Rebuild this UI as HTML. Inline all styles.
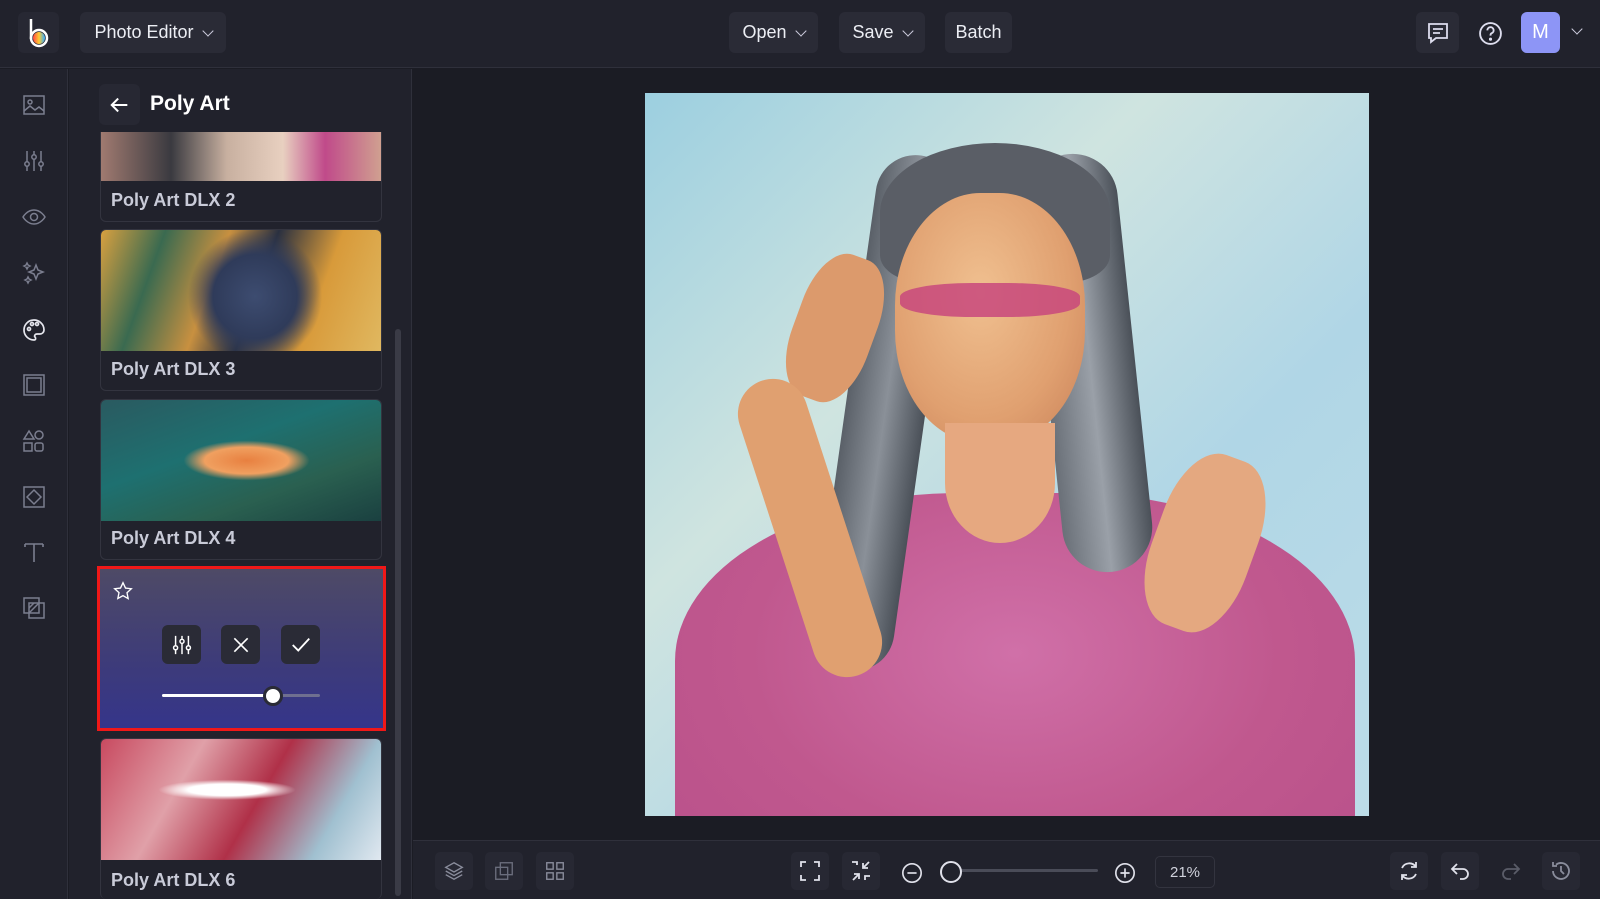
<!DOCTYPE html>
<html><head><meta charset="utf-8"><style>
*{box-sizing:border-box;margin:0;padding:0}
body{width:1600px;height:899px;overflow:hidden;background:#1b1c24;font-family:"Liberation Sans",sans-serif;color:#e6e7ee;position:relative}
.abs{position:absolute}
.top{left:0;top:0;width:1600px;height:68px;background:#21222c;border-bottom:1px solid #2f303b}
.btn{position:absolute;background:#2a2b36;border-radius:6px;color:#eceef4;font-size:18px;display:flex;align-items:center;justify-content:center;gap:10px}
.chev{width:8px;height:8px;border-right:1.6px solid #ccd;border-bottom:1.6px solid #ccd;transform:rotate(45deg);margin-top:-4px}
.side{left:0;top:69px;width:68px;height:830px;background:#21222c;border-right:1px solid #2f303b}
.panel{left:69px;top:69px;width:343px;height:830px;background:#21222c;border-right:1px solid #2f303b}
.card{position:absolute;left:100px;width:282px;border:1px solid #33343f;border-radius:6px;overflow:hidden;background:#21222c}
.card .lbl{position:absolute;left:10px;bottom:10px;font-size:18px;color:#c9cbd8;font-weight:bold}
.ic{position:absolute;left:22px;width:24px;height:24px}
.bot{left:413px;top:840px;width:1187px;height:59px;background:#21222c;border-top:1px solid #2f303b}
.bb{position:absolute;top:852px;width:38px;height:38px;background:#272833;border-radius:5px;display:flex;align-items:center;justify-content:center}
</style></head><body>
<div class="abs top"></div>
<div class="btn" style="left:18px;top:12px;width:41px;height:41px;background:#272833">
<svg width="28" height="32" viewBox="0 0 28 32"><path d="M6 2v20" stroke="#fff" stroke-width="2.5"/><circle cx="14" cy="21" r="8" fill="none" stroke="#fff" stroke-width="2.5"/><circle cx="14" cy="21" r="6" fill="url(#g)"/><defs><linearGradient id="g"><stop offset="0" stop-color="#f44"/><stop offset=".5" stop-color="#fc3"/><stop offset="1" stop-color="#3af"/></linearGradient></defs></svg></div>
<div class="btn" style="left:80px;top:12px;width:146px;height:41px">Photo Editor <span class="chev"></span></div>
<div class="btn" style="left:729px;top:12px;width:89px;height:41px">Open <span class="chev"></span></div>
<div class="btn" style="left:839px;top:12px;width:86px;height:41px">Save <span class="chev"></span></div>
<div class="btn" style="left:945px;top:12px;width:67px;height:41px">Batch</div>
<div class="btn" style="left:1416px;top:12px;width:43px;height:41px"><svg width="24" height="24" viewBox="0 0 24 24" fill="none" stroke="#dde" stroke-width="1.8"><path d="M3 3h18v14H10l-5 4v-4H3z"/><path d="M7 8h10M7 12h7"/></svg></div>
<div class="abs" style="left:1478px;top:21px"><svg width="25" height="25" viewBox="0 0 24 24" fill="none" stroke="#dde" stroke-width="1.8"><circle cx="12" cy="12" r="10"/><path d="M9 9a3 3 0 1 1 4 2.8c-1 .4-1 1.2-1 2.2"/><circle cx="12" cy="17.5" r=".6" fill="#dde"/></svg></div>
<div class="btn" style="left:1521px;top:12px;width:39px;height:41px;background:#8d95f6;font-size:20px;color:#fff">M</div>
<span class="chev abs" style="left:1573px;top:29px"></span>

<div class="abs side"></div>
<svg class="ic" style="top:93px" viewBox="0 0 24 24" fill="none" stroke="#7b7e8f" stroke-width="1.5"><rect x="2" y="3" width="20" height="18"/><circle cx="8" cy="9" r="2"/><path d="M2 18l6-5 5 4 4-3 5 4"/></svg>
<svg class="ic" style="top:149px" viewBox="0 0 24 24" fill="none" stroke="#7b7e8f" stroke-width="1.5"><path d="M5 2v20M12 2v20M19 2v20"/><circle cx="5" cy="15" r="2.2" fill="#21222c"/><circle cx="12" cy="8" r="2.2" fill="#21222c"/><circle cx="19" cy="15" r="2.2" fill="#21222c"/></svg>
<svg class="ic" style="top:205px" viewBox="0 0 24 24" fill="none" stroke="#7b7e8f" stroke-width="1.5"><path d="M1 12s4-7 11-7 11 7 11 7-4 7-11 7S1 12 1 12z"/><circle cx="12" cy="12" r="3.5"/></svg>
<svg class="ic" style="top:261px" viewBox="0 0 24 24" fill="none" stroke="#7b7e8f" stroke-width="1.5"><path d="M14 4l2 5 5 2-5 2-2 5-2-5-5-2 5-2zM5 2l1 2 2 1-2 1-1 2-1-2-2-1 2-1zM6 16l1 2 2 1-2 1-1 2-1-2-2-1 2-1z"/></svg>
<svg class="ic" style="top:318px" viewBox="0 0 24 24" fill="none" stroke="#e6e7ee" stroke-width="1.7"><path d="M12 2a10 10 0 1 0 0 20c2 0 2-2 1-3s0-3 2-3h3a4 4 0 0 0 4-4c0-6-5-10-10-10z"/><circle cx="7" cy="11" r="1.5"/><circle cx="10" cy="6" r="1.5"/><circle cx="15" cy="6" r="1.5"/></svg>
<svg class="ic" style="top:373px" viewBox="0 0 24 24" fill="none" stroke="#7b7e8f" stroke-width="1.5"><rect x="2" y="2" width="20" height="20"/><rect x="5" y="5" width="14" height="14"/></svg>
<svg class="ic" style="top:429px" viewBox="0 0 24 24" fill="none" stroke="#7b7e8f" stroke-width="1.5"><path d="M7 2l5 8H2z"/><circle cx="17" cy="6" r="4"/><rect x="2" y="14" width="8" height="8"/><rect x="13" y="14" width="8" height="8" rx="2"/></svg>
<svg class="ic" style="top:485px" viewBox="0 0 24 24" fill="none" stroke="#7b7e8f" stroke-width="1.5"><rect x="2" y="2" width="20" height="20"/><path d="M5 12l7-7 7 7-7 7z"/></svg>
<svg class="ic" style="top:540px" viewBox="0 0 24 24" fill="none" stroke="#7b7e8f" stroke-width="1.6"><path d="M3 4h18M12 4v18M3 4v3M21 4v3"/></svg>
<svg class="ic" style="top:596px" viewBox="0 0 24 24" fill="none" stroke="#7b7e8f" stroke-width="1.5"><rect x="2" y="2" width="15" height="15"/><rect x="7" y="7" width="15" height="15"/><path d="M7 12l5-5M7 17l10-10"/></svg>

<div class="abs panel"></div>
<div class="btn" style="left:99px;top:84px;width:41px;height:41px;background:#272833"><svg width="22" height="22" viewBox="0 0 24 24" fill="none" stroke="#fff" stroke-width="2.2"><path d="M20 12H4M10 5l-7 7 7 7"/></svg></div>
<div class="abs" style="left:150px;top:92px;font-size:21px;font-weight:bold;color:#fff">Poly Art</div>

<div class="card" style="top:132px;height:90px;border-top:none;border-radius:0 0 6px 6px"><div style="height:49px;background:linear-gradient(90deg,#a07a70,#3a3a40 25%,#c8b0a0 45%,#e8d0c0 65%,#c04a8a 80%,#d0a090)"></div><div class="lbl">Poly Art DLX 2</div></div>
<div class="card" style="top:229px;height:162px"><div style="height:121px;background:radial-gradient(circle at 55% 55%,#3d4c70 0,#2f3b5a 25%,transparent 40%),linear-gradient(110deg,#d8a040,#3a6a50 20%,#c89040 40%,#2a3040 55%,#d89a3a 75%,#e0b860)"></div><div class="lbl">Poly Art DLX 3</div></div>
<div class="card" style="top:399px;height:161px"><div style="height:121px;background:radial-gradient(ellipse 30% 22% at 52% 50%,#e88040 0,#f0a060 50%,transparent 75%),linear-gradient(160deg,#2a5a60,#1e7070 40%,#2a6050 70%,#1a4040)"></div><div class="lbl">Poly Art DLX 4</div></div>
<div class="abs" style="left:97px;top:566px;width:289px;height:165px;border:3px solid #f01818;background:linear-gradient(180deg,#4e4a66,#3d3b7a 60%,#35358a)"></div>
<svg class="abs" style="left:113px;top:581px" width="20" height="20" viewBox="0 0 24 24" fill="none" stroke="#fff" stroke-width="1.6"><path d="M12 2l3 6.5 7 .8-5.2 4.8 1.4 7L12 17.6 5.8 21l1.4-7L2 9.3l7-.8z"/></svg>
<div class="btn" style="left:162px;top:625px;width:39px;height:39px;background:#2a2b36"><svg width="22" height="22" viewBox="0 0 24 24" fill="none" stroke="#fff" stroke-width="1.6"><path d="M5 2v20M12 2v20M19 2v20"/><circle cx="5" cy="15" r="2.2" fill="#2a2b36"/><circle cx="12" cy="8" r="2.2" fill="#2a2b36"/><circle cx="19" cy="15" r="2.2" fill="#2a2b36"/></svg></div>
<div class="btn" style="left:221px;top:625px;width:39px;height:39px;background:#2a2b36"><svg width="20" height="20" viewBox="0 0 24 24" stroke="#fff" stroke-width="2"><path d="M4 4l16 16M20 4L4 20"/></svg></div>
<div class="btn" style="left:281px;top:625px;width:39px;height:39px;background:#2a2b36"><svg width="22" height="22" viewBox="0 0 24 24" fill="none" stroke="#fff" stroke-width="2"><path d="M3 12l6 6L21 5"/></svg></div>
<div class="abs" style="left:162px;top:694px;width:158px;height:3px;background:#6f6f90;border-radius:2px"></div>
<div class="abs" style="left:162px;top:694px;width:110px;height:3px;background:#fff;border-radius:2px"></div>
<div class="abs" style="left:263px;top:686px;width:20px;height:20px;border-radius:50%;background:#fff;border:3px solid #2a2b36"></div>
<div class="card" style="top:738px;height:161px;border-bottom:none"><div style="height:121px;background:radial-gradient(ellipse 35% 12% at 45% 42%,#fff 0,#fff 40%,transparent 70%),linear-gradient(120deg,#c84a60,#e0a0a8 30%,#b03048 55%,#a0c0d0 80%,#e0e8f0)"></div><div class="lbl" style="bottom:8px">Poly Art DLX 6</div></div>
<div class="abs" style="left:395px;top:329px;width:6px;height:567px;background:#3a3b46;border-radius:3px"></div>

<div class="abs" style="left:645px;top:93px;width:724px;height:723px;overflow:hidden;background:linear-gradient(135deg,#9ccfe0,#cfe4e0 35%,#b0d6e6 65%,#bcdce8)">
 <div class="abs" style="left:30px;top:400px;width:680px;height:400px;border-radius:42% 42% 0 0;background:radial-gradient(ellipse at 50% 40%,#d070a8,#c0588e 55%,#b8508a)"></div>
 <div class="abs" style="left:200px;top:60px;width:80px;height:520px;border-radius:40px;background:linear-gradient(90deg,#5a6068,#8a9098,#4a5058);transform:rotate(8deg)"></div>
 <div class="abs" style="left:400px;top:60px;width:90px;height:420px;border-radius:45px;background:linear-gradient(90deg,#6a7078,#9aa0a8,#4a5058);transform:rotate(-6deg)"></div>
 <div class="abs" style="left:235px;top:50px;width:230px;height:140px;border-radius:50% 50% 20% 20%;background:#5a5e66"></div>
 <div class="abs" style="left:250px;top:100px;width:190px;height:250px;border-radius:45%;background:radial-gradient(ellipse at 45% 40%,#f0c090,#e0a070 60%,#c88058)"></div>
 <div class="abs" style="left:255px;top:190px;width:180px;height:34px;border-radius:40%;background:#c8487c;opacity:.85"></div>
 <div class="abs" style="left:300px;top:330px;width:110px;height:120px;background:#e6a880;border-radius:0 0 50% 50%"></div>
 <div class="abs" style="left:150px;top:160px;width:80px;height:150px;border-radius:40%;background:#dc9a6c;transform:rotate(20deg)"></div>
 <div class="abs" style="left:130px;top:280px;width:70px;height:310px;border-radius:35px;background:#e0a070;transform:rotate(-18deg)"></div>
 <div class="abs" style="left:510px;top:360px;width:100px;height:180px;border-radius:40%;background:#e4a880;transform:rotate(20deg)"></div>
</div>

<div class="abs bot"></div>
<div class="bb" style="left:435px"><svg width="22" height="22" viewBox="0 0 24 24" fill="none" stroke="#8a8d9c" stroke-width="1.5"><path d="M12 3l9 5-9 5-9-5zM3 12l9 5 9-5M3 16l9 5 9-5"/></svg></div>
<div class="bb" style="left:485px"><svg width="22" height="22" viewBox="0 0 24 24" fill="none" stroke="#6a6d7c" stroke-width="1.5"><rect x="8" y="3" width="13" height="13"/><rect x="3" y="8" width="13" height="13"/></svg></div>
<div class="bb" style="left:536px"><svg width="22" height="22" viewBox="0 0 24 24" fill="none" stroke="#8a8d9c" stroke-width="1.5"><rect x="3" y="3" width="7" height="7"/><rect x="14" y="3" width="7" height="7"/><rect x="3" y="14" width="7" height="7"/><rect x="14" y="14" width="7" height="7"/></svg></div>
<div class="bb" style="left:791px"><svg width="24" height="24" viewBox="0 0 24 24" fill="none" stroke="#e0e1ea" stroke-width="1.8"><path d="M3 8V3h5M16 3h5v5M21 16v5h-5M8 21H3v-5"/></svg></div>
<div class="bb" style="left:842px"><svg width="24" height="24" viewBox="0 0 24 24" fill="none" stroke="#e0e1ea" stroke-width="1.8"><path d="M3 3h5v3M14 9l6-6M14 4v5h5M10 15l-6 6M5 15h5v5M16 21v-4h5"/></svg></div>
<svg class="abs" style="left:901px;top:862px" width="22" height="22" viewBox="0 0 24 24" fill="none" stroke="#e0e1ea" stroke-width="1.8"><circle cx="12" cy="12" r="10"/><path d="M7 12h10"/></svg>
<div class="abs" style="left:952px;top:869px;width:146px;height:3px;background:#4a4c58;border-radius:2px"></div>
<div class="abs" style="left:940px;top:861px;width:22px;height:22px;border-radius:50%;border:2px solid #e0e1ea;background:#21222c"></div>
<svg class="abs" style="left:1114px;top:862px" width="22" height="22" viewBox="0 0 24 24" fill="none" stroke="#e0e1ea" stroke-width="1.8"><circle cx="12" cy="12" r="10"/><path d="M7 12h10M12 7v10"/></svg>
<div class="abs" style="left:1155px;top:856px;width:60px;height:32px;border:1px solid #33343f;border-radius:5px;font-size:15px;color:#d0d2dc;display:flex;align-items:center;justify-content:center">21%</div>
<div class="bb" style="left:1390px"><svg width="24" height="24" viewBox="0 0 24 24" fill="none" stroke="#e0e1ea" stroke-width="1.8"><path d="M19 8A8 8 0 0 0 5 9M5 16a8 8 0 0 0 14-1M19 3v5h-5M5 21v-5h5"/></svg></div>
<div class="bb" style="left:1441px"><svg width="24" height="24" viewBox="0 0 24 24" fill="none" stroke="#e0e1ea" stroke-width="1.8"><path d="M9 5L4 10l5 5M4 10h11a5 5 0 0 1 0 10h-3"/></svg></div>
<svg class="abs" style="left:1499px;top:859px" width="24" height="24" viewBox="0 0 24 24" fill="none" stroke="#5a5c68" stroke-width="1.8"><path d="M15 5l5 5-5 5M20 10H9a5 5 0 0 0 0 10h3"/></svg>
<div class="bb" style="left:1542px"><svg width="24" height="24" viewBox="0 0 24 24" fill="none" stroke="#8a8d9c" stroke-width="1.8"><path d="M4 12a8 8 0 1 0 3-6.3M4 3v4h4M12 7v5l3 3"/></svg></div>
</body></html>
